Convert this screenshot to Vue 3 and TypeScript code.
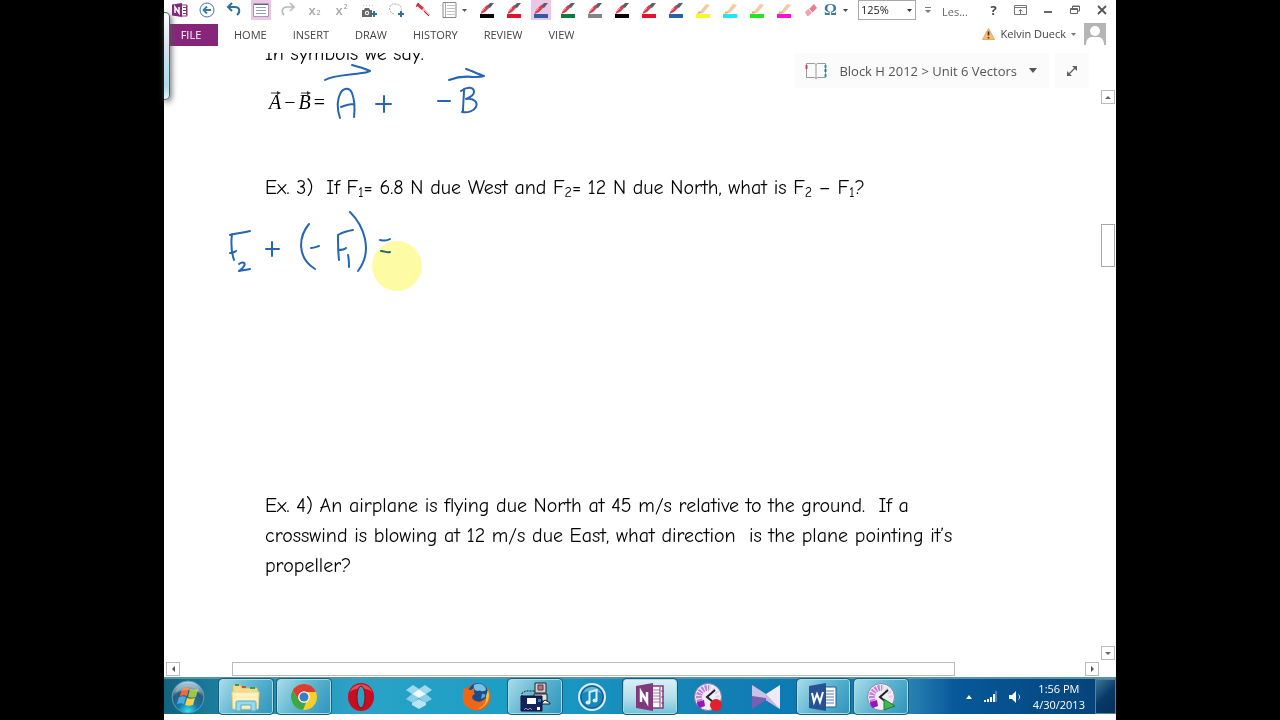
<script setup lang="ts">
import { ref } from 'vue'

const zoom = ref('125%')
const zoomLevels = ['75%', '100%', '125%', '150%', '200%']

const tabs = ['HOME', 'INSERT', 'DRAW', 'HISTORY', 'REVIEW', 'VIEW']

interface Pen {
  name: string
  color: string
  marker: boolean
}

const pens: Pen[] = [
  { name: 'Black pen', color: '#050505', marker: false },
  { name: 'Red pen', color: '#e0142d', marker: false },
  { name: 'Blue pen', color: '#2560a8', marker: false },
  { name: 'Green pen', color: '#0e7a3c', marker: false },
  { name: 'Gray pen', color: '#858585', marker: false },
  { name: 'Thick black pen', color: '#050505', marker: false },
  { name: 'Thick red pen', color: '#e8112d', marker: false },
  { name: 'Thick blue pen', color: '#2560a8', marker: false },
  { name: 'Yellow highlighter', color: '#f7f72c', marker: true },
  { name: 'Cyan highlighter', color: '#22e6ee', marker: true },
  { name: 'Green highlighter', color: '#22e622', marker: true },
  { name: 'Magenta highlighter', color: '#ee12dc', marker: true },
]
const activePen = ref(2)

interface Task {
  id: string
  label: string
  open: boolean
}

const tasks: Task[] = [
  { id: 'explorer', label: 'Windows Explorer', open: true },
  { id: 'chrome', label: 'Chrome', open: true },
  { id: 'opera', label: 'Opera', open: false },
  { id: 'dropbox', label: 'Dropbox', open: false },
  { id: 'firefox', label: 'Firefox', open: false },
  { id: 'network', label: 'Network tool', open: true },
  { id: 'itunes', label: 'iTunes', open: false },
  { id: 'onenote', label: 'OneNote', open: true },
  { id: 'recorder', label: 'Recorder', open: false },
  { id: 'movie', label: 'Visual player', open: false },
  { id: 'word', label: 'Word', open: true },
  { id: 'player', label: 'Recorder playback', open: true },
]
</script>

<template>
  <div class="stage">
    <div class="window">
      <div class="glass-edge"></div>

      <header class="quickbar">
        <span class="slot">
          <svg width="16" height="16" viewBox="0 0 16 16">
            <path d="M9 3h6v11H9z" fill="#fff" stroke="#80397b" />
            <path d="M11 5.500h3M11 8.500h3M11 11.500h3M14.500 4v9" stroke="#80397b" />
            <path d="M0 2.500 10 1v14L0 13.500z" fill="#80297b" />
            <path d="M3 11V5l4 6V5" fill="none" stroke="#fff" stroke-width="1.500" />
          </svg>
        </span>
        <button class="slot" aria-label="Back">
          <svg width="16" height="16" viewBox="0 0 16 16" fill="none" stroke="#39799d">
            <circle cx="8" cy="8" r="7" />
            <path d="M12 8H4.500M8 4.500 4.500 8 8 11.500" stroke-width="1.800" />
          </svg>
        </button>
        <button class="slot" aria-label="Undo">
          <svg width="16" height="16" viewBox="0 0 16 16" fill="none" stroke="#2e7297" stroke-width="2">
            <path d="M6 1 2 5l4 4M2.500 5H9c5 0 5.500 5 2 8" />
          </svg>
        </button>
        <button class="slot" aria-label="Dock to desktop">
          <span class="lit">
            <svg width="16" height="14" viewBox="0 0 16 14">
              <path d="M.5.500h15v13H.5z" fill="#fff" stroke="#a49cad" />
              <path d="M1 1.500h14" stroke="#58698a" />
              <path d="M3 4.500h10M3 7.500h10M3 10.500h10" stroke="#8ea0bd" />
            </svg>
          </span>
        </button>
        <button class="slot" aria-label="Redo">
          <svg width="16" height="16" viewBox="0 0 16 16" fill="none" stroke="#b9b9b9" stroke-width="1.600">
            <path d="m10 1 4 4-4 4M14 5H7c-5 0-6 5-3 8" />
          </svg>
        </button>
        <button class="slot script" aria-label="Subscript">x<sub>2</sub></button>
        <button class="slot script" aria-label="Superscript">x<sup>2</sup></button>
        <button class="slot" aria-label="Screen clipping">
          <svg width="16" height="16" viewBox="0 0 16 16">
            <path d="M1 8h2l1-2h4l1 2h2v7H1z" fill="#666" />
            <circle cx="6" cy="11" r="2.200" fill="#eee" />
            <circle cx="6" cy="11" r="1" fill="#666" />
            <path d="M13 9v6M10 12h6" stroke="#2e7297" stroke-width="2" />
            <path d="M2 3.500h12" stroke="#ccc" stroke-dasharray="1 2" />
          </svg>
        </button>
        <button class="slot" aria-label="Lasso select">
          <svg width="16" height="16" viewBox="0 0 16 16" fill="none">
            <path d="M6 12C-1 10 1 1 7 2c6 0 8 5 5 8" stroke="#aaa" stroke-dasharray="2 1" />
            <path d="M13 9v6M10 12h6" stroke="#2e7297" stroke-width="2" />
          </svg>
        </button>
        <button class="slot" aria-label="Pen">
          <svg width="16" height="16" viewBox="0 0 16 16" fill="none">
            <path d="m2 2 6 5" stroke="#d9354c" stroke-width="3" />
            <path d="m8 7 6 6.500" stroke="#f0b6b9" stroke-width="3" />
            <path d="m1 5 3-4M9 9l5 5" stroke="#a02e40" />
          </svg>
        </button>
        <button class="slot list-slot" aria-label="Rule lines">
          <svg width="25" height="16" viewBox="0 0 25 16">
            <path d="M1 .500h13v15H1z" fill="#fff" stroke="#888" />
            <path d="M3.500 1v14" stroke="#aaa" />
            <path d="M5 3.500h8M5 6.500h8M5 9.500h8M5 12.500h8" stroke="#c2c2c2" />
            <path d="M20 7h5l-2.500 3z" fill="#555" />
          </svg>
        </button>
        <button
          v-for="(pen, i) in pens"
          :key="pen.name"
          class="slot"
          :aria-label="pen.name"
          @click="activePen = i"
        >
          <span :class="{ lit: activePen === i }">
            <svg width="16" height="16" viewBox="0 0 16 16">
              <g v-if="pen.marker">
                <path d="m4 11 7-9 4 1-7 8z" fill="#f2c9a0" />
                <path d="m2 12 2-3 3 2z" fill="#e3a773" />
              </g>
              <g v-else>
                <path d="M1.500 12 3 8l5-5 3 2-5 5z" fill="#d8404f" />
                <path d="m8 4 3-3h4l-4 5z" fill="#5b5f6c" />
                <path d="m3 9 3-3" stroke="#f3a0a3" />
              </g>
              <path d="M1 12h14v4H1z" :fill="pen.color" />
            </svg>
          </span>
        </button>
        <button class="slot" aria-label="Eraser">
          <svg width="14" height="14" viewBox="0 0 14 14">
            <path d="m5 6 5-5 3 4-5 5z" fill="#e77f91" />
            <path d="m1 9 3.500-3.500L8 9.500 4.500 13H3z" fill="#f0a4ae" />
            <path d="m4.500 5.500 4 4.500" stroke="#fff" />
          </svg>
        </button>
        <button class="slot omega" aria-label="Symbol">
          <span>Ω</span>
          <svg width="5" height="3" viewBox="0 0 5 3"><path d="M0 0h5L2.500 3z" fill="#444" /></svg>
        </button>
        <label class="zoom">
          <select v-model="zoom" aria-label="Zoom">
            <option v-for="level in zoomLevels" :key="level">{{ level }}</option>
          </select>
          <svg width="5" height="3" viewBox="0 0 5 3"><path d="M0 0h5L2.500 3z" fill="#333" /></svg>
        </label>
        <button class="more" aria-label="Customize toolbar">
          <svg width="6" height="6" viewBox="0 0 6 6"><path d="M0 .500h6" stroke="#777" /><path d="M0 3h6L3 6z" fill="#777" /></svg>
        </button>
        <span class="title">Les...</span>
        <button class="slot help" aria-label="Help">?</button>
        <button class="slot" aria-label="Ribbon display options">
          <svg width="13" height="10" viewBox="0 0 13 10" fill="none" stroke="#777">
            <path d="M.5.500h12v9H.5zM1 2.500h11M6.500 9V4.500M4.500 6.500l2-2 2 2" />
          </svg>
        </button>
        <button class="slot" aria-label="Minimize">
          <svg width="10" height="10" viewBox="0 0 10 10"><path d="M1 7h8" stroke="#666" stroke-width="2" /></svg>
        </button>
        <button class="slot" aria-label="Restore">
          <svg width="10" height="10" viewBox="0 0 10 10" fill="none" stroke="#666">
            <path d="M.5 3.500h7v5h-7zM2.500 3V1h7v5H8M.5 4.500h7M3 1.500h6" />
          </svg>
        </button>
        <button class="slot" aria-label="Close">
          <svg width="10" height="10" viewBox="0 0 10 10"><path d="m1 1 8 8M9 1 1 9" stroke="#555" stroke-width="1.800" /></svg>
        </button>
      </header>

      <nav class="ribbon">
        <button class="file">FILE</button>
        <button v-for="tab in tabs" :key="tab" class="tab">{{ tab }}</button>
        <button class="account">
          <svg width="13" height="12" viewBox="0 0 13 12">
            <path d="M6.500.500 12.500 11.500H.5z" fill="#f6bd7c" stroke="#efa85e" />
            <path d="M6.500 3.500v4M6.500 9v1.500" stroke="#4b2c14" stroke-width="1.600" />
          </svg>
          <span>Kelvin Dueck</span>
          <svg width="5" height="3" viewBox="0 0 5 3"><path d="M0 0h5L2.500 3z" fill="#777" /></svg>
          <svg class="avatar" width="22" height="22" viewBox="0 0 22 22">
            <path d="M0 0h22v22H0z" fill="#b5b5b5" />
            <circle cx="11" cy="8" r="5" fill="#fff" />
            <path d="M2 22c0-6 3-8 6-8h6c3 0 6 2 6 8z" fill="#fff" />
          </svg>
        </button>
      </nav>

      <main class="page">
        <article class="notes">
          <p class="clipped">In symbols we say:</p>
          <p class="equation">
            <i class="vec">A<svg width="10" height="4" viewBox="0 0 10 4"><path d="M0 2h7" stroke="#333" /><path d="M6 0l4 2-4 2z" fill="#333" /></svg></i>
            <span>−</span>
            <i class="vec">B<svg width="10" height="4" viewBox="0 0 10 4"><path d="M0 2h7" stroke="#333" /><path d="M6 0l4 2-4 2z" fill="#333" /></svg></i>
            <span>=</span>
          </p>
          <p class="third">Ex. 3)&nbsp; If F<sub>1</sub>= 6.8 N due West and F<sub>2</sub>= 12 N due North, what is F<sub>2</sub> – F<sub>1</sub>?</p>
          <p class="fourth">Ex. 4) An airplane is flying due North at 45 m/s relative to the ground.&nbsp; If a<br />crosswind is blowing at 12 m/s due East, what direction&nbsp; is the plane pointing it’s<br />propeller?</p>
        </article>

        <svg class="ink" width="280" height="240" viewBox="220 53 280 240" fill="none" stroke="#2565b4" stroke-width="2" stroke-linecap="round" stroke-linejoin="round">
          <path d="M325 80c8-5 26-5 37-7 3 0 6-1 8-2M352 65c6 2 12 3 18 6" />
          <path d="M340 118c-3-9-3-19 1-26 4-5 9-4 11 1 3 8 3 16 2 24M341 107c5-2 9-3 13-3" />
          <path d="M376 104h15M384 96v16" />
          <path d="M449 80c8-3 16-4 24-3 4 0 8 0 11-1M466 69c6 2 12 5 18 7" />
          <path d="M438 101h12" />
          <path d="M464 89c0 8-1 15-1 22M461 91c6-5 13-4 13 1 0 3-3 5-8 7 8-1 12 3 10 8-2 4-8 6-14 5" />
          <path d="M230 235c6-2 13-2 20-4M232 234c-1 8-1 17 2 26M230 253c3 0 5-1 6-2" />
          <path d="M239 264c4-3 7-1 5 2-1 2-3 4-5 5 4-1 7-1 11-2" />
          <path d="M266 249h13M272 242v14" />
          <path d="M309 224c-10 12-13 33 6 45M311 248c3 0 5-1 8-2" />
          <path d="M338 235c5-3 9-4 15-5M338 235c0 8 0 16 1 25M338 250c3 0 6 0 8-2M348 255c1 4 1 8 1 12" />
          <path d="M350 212c13 13 24 38 8 59" />
          <path d="M380 240c4 1 7 1 10-1M381 251c3 0 6 2 9 1" />
          <circle class="pointer" cx="397" cy="266" r="25" fill="#fdfca4" stroke="none" />
        </svg>

        <div class="crumbs">
          <button class="crumb">
            <svg width="22" height="18" viewBox="0 0 22 18" fill="none" stroke="#999">
              <path d="M1.500 1.500h8l1.500 1 1.500-1h8v14h-8l-1.500 1-1.500-1h-8zM11 2.500v14" />
              <path d="M1.500 3v4" stroke="#dc4050" stroke-width="2" />
              <path d="M20.500 3v3M20.500 12v3" stroke="#2c9c8c" stroke-width="2" />
              <path d="M20.500 7v3" stroke="#3668b0" stroke-width="2" />
            </svg>
            <span>Block H 2012 &gt; Unit 6 Vectors</span>
            <svg width="8" height="5" viewBox="0 0 8 5"><path d="M0 0h8L4 5z" fill="#555" /></svg>
          </button>
          <button class="expand" aria-label="Full page view">
            <svg width="10" height="10" viewBox="0 0 10 10">
              <path d="m2 8 6-6" stroke="#666" stroke-width="1.500" />
              <path d="M5 0h5v5zM0 5v5h5z" fill="#666" />
            </svg>
          </button>
        </div>

        <div class="vscroll">
          <button aria-label="Scroll up"><svg width="6" height="3" viewBox="0 0 6 3"><path d="M0 3h6L3 0z" fill="#666" /></svg></button>
          <div class="vthumb"></div>
          <button aria-label="Scroll down"><svg width="6" height="3" viewBox="0 0 6 3"><path d="M0 0h6L3 3z" fill="#666" /></svg></button>
        </div>
      </main>

      <div class="hscroll">
        <button aria-label="Scroll left"><svg width="3" height="6" viewBox="0 0 3 6"><path d="M3 0v6L0 3z" fill="#555" /></svg></button>
        <div class="hthumb"></div>
        <button aria-label="Scroll right"><svg width="3" height="6" viewBox="0 0 3 6"><path d="M0 0v6l3-3z" fill="#555" /></svg></button>
      </div>

      <footer class="taskbar">
        <button class="start" aria-label="Start">
          <svg width="36" height="34" viewBox="0 0 36 34">
            <defs>
              <radialGradient id="orb" cx=".5" cy=".95" r=".9">
                <stop offset="0" stop-color="#35e4f7" />
                <stop offset=".35" stop-color="#1379a8" />
                <stop offset=".7" stop-color="#2d5b79" />
                <stop offset="1" stop-color="#b0cfdd" />
              </radialGradient>
            </defs>
            <circle cx="18" cy="17" r="16" fill="url(#orb)" stroke="#5c9db8" />
            <path d="M12 9c3-2 5-2 7-1l-2 8c-2-1-4-1-7 0z" fill="#ef6b3b" />
            <path d="M20 9c3 1 5 1 8 0l-2 8c-3 1-5 1-8 0z" fill="#9bc83f" />
            <path d="M9 17c3-1 5-1 7 0l-2 7c-2-1-4-1-7 0z" fill="#4ea7e3" />
            <path d="M17 18c3 1 5 1 8 0l-2 7c-3 1-5 1-8 0z" fill="#fbd144" />
            <path d="M5 13C8 2 28 2 31 13c-8-4-18-4-26 0z" fill="#fff" opacity=".25" />
          </svg>
        </button>

        <div class="tasks">
          <button v-for="task in tasks" :key="task.id" class="task" :class="{ open: task.open, bright: task.id === 'onenote' }" :aria-label="task.label">
            <svg v-if="task.id === 'explorer'" width="32" height="30" viewBox="0 0 32 30">
              <path d="M3 3h7l2 3h15l1 3v17H3z" fill="#f3dc8d" stroke="#dcbf6a" />
              <path d="M5 3h4M12 5h4M20 6h5" stroke="#3c9c4b" stroke-width="2" />
              <path d="M12 5h3" stroke="#d9473a" stroke-width="2" />
              <path d="M2 10h27l-1 17H3z" fill="#fbefb8" stroke="#ecd48b" />
              <path d="M5 13h21M5 17h21" stroke="#fff6ce" />
              <path d="M6 29v-8c0-2 1-2 2-2h16c2 0 2 1 2 2v8h-5v-6H11v6z" fill="#94daee" stroke="#5cabc9" />
            </svg>
            <svg v-else-if="task.id === 'chrome'" width="28" height="28" viewBox="0 0 28 28">
              <circle cx="14" cy="14" r="13" fill="#f6cf2d" />
              <path d="M2.700 7.500A13 13 0 0 1 26 9H14a5.500 5.500 0 0 0-5 8z" fill="#dc3c31" />
              <path d="M2.700 7.500 9 17a5.500 5.500 0 0 0 7 2.500L13 27A13 13 0 0 1 2.700 7.500z" fill="#3da64a" />
              <circle cx="14" cy="14" r="5.800" fill="#fff" />
              <circle cx="14" cy="14" r="4.500" fill="#3b7dc8" />
            </svg>
            <svg v-else-if="task.id === 'opera'" width="28" height="30" viewBox="0 0 28 30">
              <ellipse cx="14" cy="15" rx="13" ry="14" fill="#c80d21" />
              <path d="M3 10C6 0 22 0 25 10c-6-5-16-5-22 0z" fill="#f06a70" opacity=".7" />
              <ellipse cx="14" cy="15" rx="4" ry="11" fill="#2aa0c4" stroke="#8f0a19" />
            </svg>
            <svg v-else-if="task.id === 'dropbox'" width="28" height="26" viewBox="0 0 28 26">
              <path d="m8 1 6 4-7 5-6-4zM20 1l-6 4 7 5 6-4z" fill="#9fd9ef" />
              <path d="m7 10-6 5 7 4 6-5zM21 10l6 5-7 4-6-5z" fill="#8acfe9" />
              <path d="m14 5 7 5-7 4-7-4z" fill="#eafaff" />
              <path d="m7 19 7-4 7 4v2l-7 4-7-4z" fill="#b9e4f5" />
            </svg>
            <svg v-else-if="task.id === 'firefox'" width="30" height="30" viewBox="0 0 30 30">
              <circle cx="15" cy="15" r="13.500" fill="#e85a12" />
              <circle cx="16" cy="11" r="10" fill="#1b4b8d" />
              <path d="M12 3c5-3 12 0 12 5-4 3-6-1-8 1-3 0-5-3-4-6z" fill="#78c2e5" />
              <path d="M20 12c2-1 4 0 3 3l-4 2z" fill="#5aa5d4" />
              <path d="M2 6c3 0 4 2 7 2l3-2c1 3-1 4 1 6-3 1-4 4-1 6 4 3 8 2 13-3 2-3 1-7 0-10 5 6 4 14-1 19-6 6-15 5-20 0S1 12 2 6z" fill="#ee6717" />
              <path d="M26 8c3 8-1 17-10 19 6-3 9-7 8-13z" fill="#fbc03a" />
            </svg>
            <svg v-else-if="task.id === 'network'" width="32" height="30" viewBox="0 0 32 30">
              <path d="M16 1h11v10H16z" fill="#d7c9cd" stroke="#242424" />
              <path d="M19 3h5v5h-5z" fill="#c46d82" stroke="#444" />
              <path d="M15 12h13v7H15z" fill="#e2e2de" stroke="#222" />
              <path d="m26 18 5 3v1h-9z" fill="#eee" stroke="#222" />
              <path d="M3 15v-4l4-2h9" fill="none" stroke="#222" stroke-dasharray="2 1" />
              <path d="M2 14h21v15H2z" fill="#16205b" stroke="#0d123b" />
              <path d="M8 16h9v6H8z" fill="#fff" />
              <path d="M19 17h3v3h-3z" fill="#2d81b4" />
              <path d="M18 25h3v3h-3z" fill="#fff" />
              <path d="m5 28 2-2 2 2 2-2 2 2" fill="none" stroke="#8b97bd" />
            </svg>
            <svg v-else-if="task.id === 'itunes'" width="30" height="30" viewBox="0 0 30 30">
              <circle cx="15" cy="15" r="13" fill="#1686bd" stroke="#dceaf1" stroke-width="2" />
              <circle cx="15" cy="15" r="11" fill="none" stroke="#1b567e" />
              <path d="M6 11C9 3 21 3 24 11c-6-3-12-3-18 0z" fill="#8fd6ef" opacity=".6" />
              <path d="M12.500 20v-10l7-2v10" fill="none" stroke="#d2f2ff" stroke-width="2" />
              <ellipse cx="11" cy="20.500" rx="2.500" ry="2" fill="#d2f2ff" />
              <ellipse cx="18" cy="18.500" rx="2.500" ry="2" fill="#d2f2ff" />
            </svg>
            <svg v-else-if="task.id === 'onenote'" width="30" height="30" viewBox="0 0 30 30">
              <path d="M14 4h14v22H14z" fill="#fff" stroke="#80397b" stroke-width="1.500" />
              <path d="M18 8h7M18 11h7M18 14h7M18 17h7M18 20h7" stroke="#a474a0" />
              <path d="M25 5v20M26 9h3M26 15h3M26 21h3" stroke="#80397b" />
              <path d="M1 4 18 1v28L1 26z" fill="#80397b" />
              <path d="M6 20V10l6 10V10" fill="none" stroke="#fff" stroke-width="2.500" />
            </svg>
            <svg v-else-if="task.id === 'recorder' || task.id === 'player'" width="32" height="30" viewBox="0 0 32 30">
              <circle cx="16" cy="15" r="13.500" fill="#f2eef6" stroke="#8c84a3" />
              <path d="M8 19A9 9 0 0 1 17 6" fill="none" stroke="#c47fd8" stroke-width="6" stroke-dasharray="2 1" />
              <path d="M17 6a9 9 0 0 1 8 12" fill="none" stroke="#dcd3e8" stroke-width="4" stroke-dasharray="2 2" />
              <path d="m5 20 7-2 1 6-5 2c-2-1-3-4-3-6z" fill="#9318bc" />
              <path d="m23 8-8 7 6 5" fill="none" stroke="#222" stroke-width="2" />
              <circle v-if="task.id === 'recorder'" cx="24" cy="23" r="6" fill="#e3202c" />
              <path v-else d="m19 17 11 7-11 4z" fill="#43b554" stroke="#237a35" />
            </svg>
            <svg v-else-if="task.id === 'movie'" width="30" height="28" viewBox="0 0 30 28">
              <path d="m1 2 14 9v6L1 26z" fill="#7660b5" />
              <path d="m1 2 14 9v4L1 13z" fill="#c9c1e8" />
              <path d="m29 2-14 9v6l14 9z" fill="#f0eaf7" />
              <path d="m15 11 14 15-14-9z" fill="#c5b6df" />
            </svg>
            <svg v-else width="30" height="28" viewBox="0 0 30 28">
              <path d="M14 4h14v20H14z" fill="#fff" stroke="#2b579a" />
              <path d="M17 8h9M17 11h9M17 14h9M17 17h9M17 20h9" stroke="#507ab5" />
              <path d="m1 3 17-3v28L1 25z" fill="#275394" />
              <path d="m4 10 2 9 3-8 3 8 3-10" fill="none" stroke="#fff" stroke-width="2" />
            </svg>
          </button>
        </div>

        <div class="tray">
          <svg width="6" height="4" viewBox="0 0 6 4"><path d="M0 4h6L3 0z" fill="#fff" /></svg>
          <svg width="14" height="12" viewBox="0 0 14 12">
            <path d="M1 9h2v2H1zM4 8h2v3H4zM7 6h2v5H7zM10 3h2v8h-2z" fill="#fff" />
            <path d="M13 0v11" stroke="#9cb8ce" />
          </svg>
          <svg width="14" height="14" viewBox="0 0 14 14" fill="none">
            <path d="M1 5h3l4-4v12L4 9H1z" fill="#fff" />
            <path d="M10.500 4.500c1.500 1 1.500 4 0 5" stroke="#d5e6f1" />
          </svg>
          <div class="clock"><time>1:56 PM</time><span>4/30/2013</span></div>
        </div>
        <button class="desktop" aria-label="Show desktop"></button>
      </footer>
    </div>
  </div>
</template>

<style>
body {
  margin: 0;
  background: #000;
}
</style>

<style scoped>
* {
  box-sizing: border-box;
}
button {
  margin: 0;
  padding: 0;
  border: 0;
  background: none;
  font: inherit;
  color: inherit;
}
svg {
  display: block;
  flex: none;
}
p {
  margin: 0;
}
.stage {
  min-height: 100vh;
  padding: 0 164px;
  display: flex;
  background: #000;
}
.window {
  position: relative;
  flex: 1;
  min-width: 0;
  display: flex;
  flex-direction: column;
  padding-bottom: 6px;
  background: #fff;
  font-family: "Open Sans", "Noto Sans", sans-serif;
  color: #444;
}
.glass-edge {
  position: absolute;
  z-index: 2;
  left: 0;
  top: 12px;
  width: 6px;
  height: 88px;
  border: solid #3b6878;
  border-width: 1px 1px 1px 0;
  border-radius: 0 5px 5px 0;
  background: linear-gradient(#fff, #d9dfec 42%, #bfe2ee 58%, #a9ddea 85%, #e5f5fa);
  box-shadow: 1px 2px 6px #555;
}
.quickbar {
  display: flex;
  align-items: center;
  height: 20px;
  padding: 0 1px 0 2px;
}
.slot {
  flex: none;
  width: 27px;
  height: 20px;
  display: flex;
  align-items: center;
  justify-content: center;
}
.lit {
  width: 20px;
  height: 20px;
  display: flex;
  align-items: center;
  justify-content: center;
  background: #ecc6e7;
}
.script {
  gap: 1px;
  align-items: baseline;
  font-size: 13px;
  font-weight: 600;
  color: #a9a9a9;
  line-height: 20px;
}
.script sub,
.script sup {
  font-size: 7px;
  line-height: 1;
}
.script sup {
  align-self: flex-start;
  margin-top: 3px;
}
.list-slot {
  width: 37px;
  justify-content: flex-start;
  padding-left: 6px;
}
.omega {
  width: 34px;
  gap: 6px;
  justify-content: flex-start;
  font: 700 16px/20px "Liberation Serif", serif;
  color: #3b7ca5;
}
.zoom {
  position: relative;
  display: flex;
  flex: none;
}
.zoom select {
  appearance: none;
  width: 58px;
  height: 20px;
  margin: 0;
  padding: 0 2px;
  border: 1px solid #aaa;
  border-radius: 0;
  background: #fff;
  font: 11px/16px "Open Sans", sans-serif;
  color: #222;
}
.zoom svg {
  position: absolute;
  right: 4px;
  top: 9px;
  pointer-events: none;
}
.more {
  width: 24px;
  display: flex;
  justify-content: center;
}
.title {
  flex: 1;
  padding: 3px 0 0 2px;
  font-size: 11px;
  line-height: 16px;
  white-space: nowrap;
  color: #666;
}
.help {
  font-size: 13px;
  font-weight: 700;
}
.ribbon {
  display: flex;
  align-items: flex-start;
  gap: 26px;
  height: 33px;
  padding-top: 4px;
  font-size: 11px;
  line-height: 22px;
  white-space: nowrap;
}
.file {
  width: 54px;
  height: 22px;
  margin-right: -10px;
  background: #86257a;
  color: #fff;
}
.account {
  margin: -1px 10px 0 auto;
  display: flex;
  align-items: center;
  gap: 5px;
}
.account .avatar {
  margin-left: 3px;
}
.page {
  position: relative;
  flex: 1;
  display: flex;
  overflow: hidden;
}
.notes {
  flex: 1;
  padding-left: 101px;
  font-family: "Comic Sans MS", "Comic Neue", Lato, sans-serif;
  font-size: 20px;
  line-height: 30px;
  color: #000;
  white-space: nowrap;
}
.notes sub {
  font-size: 14px;
  line-height: 1;
  vertical-align: -3px;
}
.clipped {
  margin-top: -14px;
}
.equation {
  display: flex;
  gap: 3px;
  padding: 18px 0 0 4px;
  font-family: "Liberation Serif", serif;
  font-size: 20px;
}
.vec {
  position: relative;
}
.vec svg {
  position: absolute;
  left: 2px;
  top: 4px;
}
.third {
  margin-top: 56px;
}
.fourth {
  margin-top: 288px;
}
.ink {
  position: absolute;
  left: 56px;
  top: 0;
}
.pointer {
  mix-blend-mode: multiply;
}
.crumbs {
  position: absolute;
  top: 0;
  right: 27px;
  display: flex;
  gap: 6px;
  font-size: 13px;
}
.crumb {
  display: flex;
  align-items: center;
  gap: 12px;
  height: 35px;
  padding: 0 12px 0 10px;
  background: #fbfbfb;
  white-space: nowrap;
  color: #555;
}
.expand {
  width: 34px;
  height: 35px;
  display: grid;
  place-items: center;
  background: #fbfbfb;
}
.vscroll {
  width: 15px;
  padding-right: 1px;
  margin-top: 37px;
  display: flex;
  flex-direction: column;
}
.vscroll button,
.hscroll button {
  flex: none;
  width: 14px;
  height: 14px;
  display: grid;
  place-items: center;
  border: 1px solid #bbb;
  background: #fff;
}
.vthumb {
  height: 43px;
  margin: 120px 0 auto;
  border: 1px solid #aaa;
  background: #fff;
}
.hscroll {
  display: flex;
  padding: 2px 17px 1px 2px;
}
.hthumb {
  flex: 1;
  margin: 0 130px 0 52px;
  border: 1px solid #bbb;
}
.taskbar {
  display: flex;
  height: 37px;
  border-top: 2px solid #5793a6;
  background: linear-gradient(90deg, #12627d, #1a7c9b 5%, #2ba3c7 20%, #1a9dc5 38%, #147fb3 58%, #0878b4 70%, #2a84b4 78%, #07599a 83%, #044176);
}
.start {
  width: 55px;
  padding-left: 6px;
}
.tasks {
  flex: 1;
  display: flex;
  gap: 4px;
}
.task {
  flex: 1 1 0;
  display: grid;
  place-items: center;
  border: 1px solid transparent;
  border-radius: 3px;
}
.task.open {
  border-color: #a8dce9;
  outline: 1px solid #17607d;
  outline-offset: 0;
  background: linear-gradient(125deg, #a9dbe8, #5cb4d0 50%, #2f95bb);
}
.task.bright {
  background: linear-gradient(#d9eff4, #b4dde9 55%, #74c4dc);
}
.tray {
  width: 187px;
  padding: 0 10px 0 58px;
  display: flex;
  align-items: center;
  justify-content: space-between;
  color: #fff;
}
.clock {
  display: flex;
  flex-direction: column;
  align-items: center;
  font-size: 11px;
  line-height: 16px;
}
.desktop {
  width: 21px;
  border: 1px solid #4c86a4;
  background: linear-gradient(135deg, #3c7596, #073a66 50%, #052f57);
}
</style>
